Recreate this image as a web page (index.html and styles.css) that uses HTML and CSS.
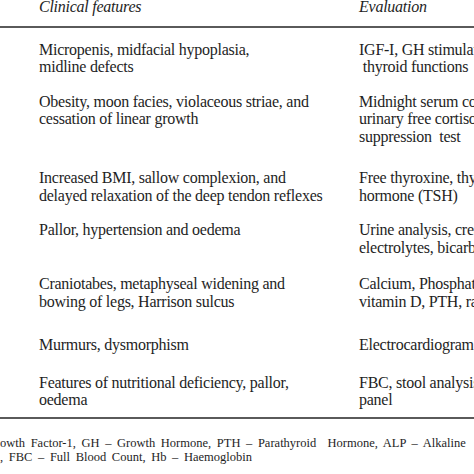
FILE: index.html
```html
<!DOCTYPE html>
<html>
<head>
<meta charset="utf-8">
<link rel="stylesheet" href="styles.css">
</head>
<body>
<div class="page">
  <div class="row head">
    <div class="cell">Clinical features</div>
    <div class="cell">Evaluation</div>
  </div>
  <div class="body">
    <div class="row r1">
      <div class="cell">Micropenis, midfacial hypoplasia,<br>midline defects</div>
      <div class="cell">IGF-I, GH stimulation test,<br>&nbsp;thyroid functions</div>
    </div>
    <div class="row r2">
      <div class="cell">Obesity, moon facies, violaceous striae, and<br>cessation of linear growth</div>
      <div class="cell">Midnight serum cortisol, 24 hour<br>urinary free cortisol, dexamethasone<br>suppression&nbsp; test</div>
    </div>
    <div class="row r3">
      <div class="cell">Increased BMI, sallow complexion, and<br>delayed relaxation of the deep tendon reflexes</div>
      <div class="cell">Free thyroxine, thyroid stimulating<br>hormone (TSH)</div>
    </div>
    <div class="row r4">
      <div class="cell">Pallor, hypertension and oedema</div>
      <div class="cell">Urine analysis, creatinine,<br>electrolytes, bicarbonate</div>
    </div>
    <div class="row r5">
      <div class="cell">Craniotabes, metaphyseal widening and<br>bowing of legs, Harrison sulcus</div>
      <div class="cell">Calcium, Phosphate, ALP,<br>vitamin D, PTH, radiographs</div>
    </div>
    <div class="row r6">
      <div class="cell">Murmurs, dysmorphism</div>
      <div class="cell">Electrocardiogram, echocardiogram</div>
    </div>
    <div class="row r7">
      <div class="cell">Features of nutritional deficiency, pallor,<br>oedema</div>
      <div class="cell">FBC, stool analysis, coeliac<br>panel</div>
    </div>
  </div>
  <div class="foot">
    <p class="note">owth Factor-1, GH – Growth Hormone, PTH – Parathyroid&nbsp; Hormone, ALP – Alkaline</p>
    <p class="note">, FBC – Full Blood Count, Hb – Haemoglobin</p>
  </div>
</div>
</body>
</html>
```
FILE: styles.css
```css
html, body {
  margin: 0;
  padding: 0;
  background: #ffffff;
}
.page {
  width: 474px;
  height: 474px;
  overflow: hidden;
  font-family: "Liberation Serif", "Times New Roman", serif;
  color: #1e1e1e;
  font-size: 16px;
  line-height: 17.5px;
  letter-spacing: -0.25px;
}
.row {
  display: grid;
  grid-template-columns: 320px 1fr;
  padding-left: 39px;
  white-space: nowrap;
}
.head {
  font-style: italic;
  margin-top: -2px;
  padding-bottom: 10px;
  border-bottom: 2px solid #5a5a5a;
}
.body {
  padding-top: 13px;
  padding-bottom: 8px;
  border-bottom: 2px solid #5a5a5a;
}
.body .r2 { margin-top: 17px; }
.body .r3 { margin-top: 24px; }
.body .r4 { margin-top: 17px; }
.body .r5 { margin-top: 19px; }
.body .r6 { margin-top: 26px; }
.body .r7 { margin-top: 20px; }
.foot {
  padding-top: 17px;
  font-size: 12.5px;
  line-height: 14.5px;
  letter-spacing: 0;
  white-space: nowrap;
}
.note {
  margin: 0;
  word-spacing: 2.5px;
}
```
